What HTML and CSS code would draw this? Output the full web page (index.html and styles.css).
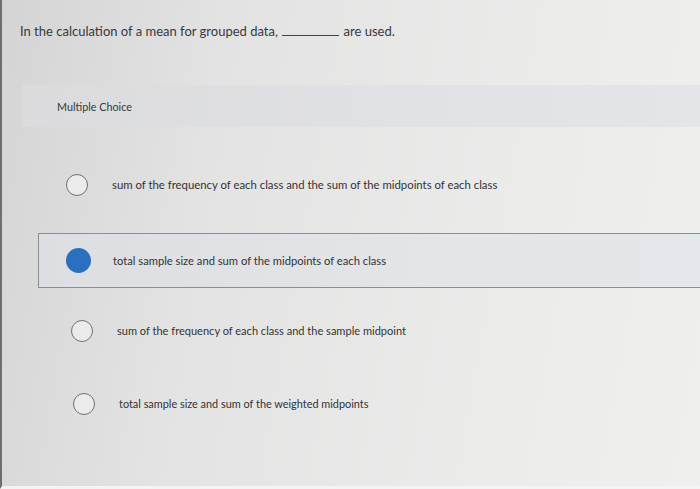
FILE: index.html
```html
<!DOCTYPE html>
<html>
<head>
<meta charset="utf-8">
<link rel="stylesheet" href="styles.css">
</head>
<body>
<div class="page">
  <p class="question">In the calculation of a mean for grouped data, <span class="blank"></span> are used.</p>
  <section class="panel">
    <div class="panel-header">Multiple Choice</div>
    <div class="options">
      <div class="option"><span class="radio"></span><span class="label">sum of the frequency of each class and the sum of the midpoints of each class</span></div>
      <div class="option selected"><span class="radio"></span><span class="label">total sample size and sum of the midpoints of each class</span></div>
      <div class="option"><span class="radio"></span><span class="label">sum of the frequency of each class and the sample midpoint</span></div>
      <div class="option"><span class="radio"></span><span class="label">total sample size and sum of the weighted midpoints</span></div>
    </div>
  </section>
</div>
</body>
</html>
```
FILE: styles.css
```css
html, body {
  margin: 0;
  padding: 0;
  height: 100%;
}
body {
  background: linear-gradient(100deg, #d4d4d4 0%, #e3e3e3 30%, #ebebea 70%, #efefee 100%);
  font-family: Lato, "Liberation Sans", sans-serif;
  color: #3c3c3e;
  overflow: hidden;
}
.page {
  height: 100%;
  border-left: 2px solid #6e6e6e;
  box-sizing: border-box;
  border-bottom: 3px solid #f4f4f4;
}
.question {
  margin: 0;
  padding: 22px 0 0 18px;
  font-size: 13px;
  line-height: 18px;
  color: #38383a;
}
.blank {
  display: inline-block;
  width: 57px;
  border-bottom: 1px solid #444;
  margin: 0 1px;
}
.panel {
  margin: 45px 0 0 20px;
}
.panel-header {
  height: 42px;
  display: flex;
  align-items: center;
  padding-left: 35px;
  font-size: 10.8px;
  color: #38383a;
  background: linear-gradient(90deg, #dbdbdd 0%, #e0e1e4 50%, #e3e5e8 100%);
}
.options {
  display: flex;
  flex-direction: column;
  gap: 18px;
  padding: 30px 0 0 16px;
}
.option {
  height: 55px;
  box-sizing: border-box;
  border: 1px solid transparent;
  border-right: none;
  display: flex;
  align-items: center;
  padding-left: 27px;
  font-size: 11.35px;
  color: #333335;
}
.option.selected {
  border-color: #8a8d92;
  background: linear-gradient(90deg, #dcdee1 0%, #e3e5e9 60%, #e3e6ea 100%);
  padding-left: 27px;
  margin-top: 3px;
  font-size: 11.2px;
}
.option:nth-child(3) { padding-left: 32px; margin-top: -3px; font-size: 11.05px; }
.option:nth-child(4) { padding-left: 34px; font-size: 10.9px; }
.radio {
  width: 22px;
  height: 22px;
  box-sizing: border-box;
  border: 1.5px solid #707176;
  border-radius: 50%;
  flex: none;
  margin-right: 24px;
  background: #ebebeb;
}
.selected .radio {
  width: 25px;
  height: 25px;
  border: none;
  background: #2a6fc0;
  margin-right: 22px;
}
```
